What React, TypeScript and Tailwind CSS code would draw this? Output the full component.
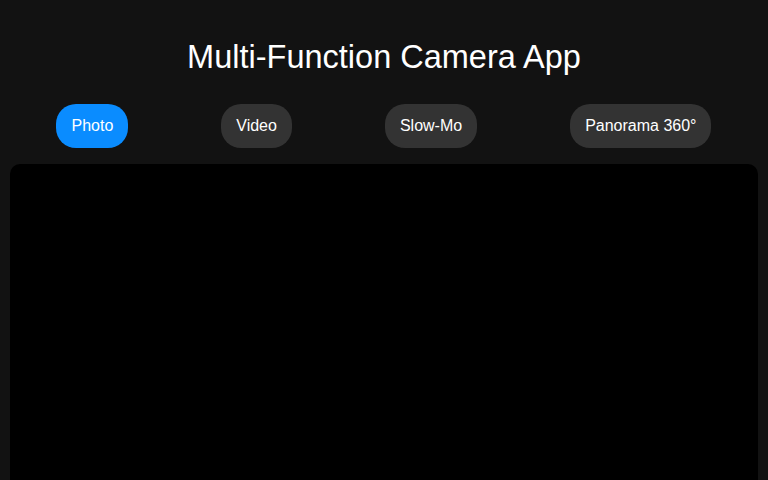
const MODES = ["Photo", "Video", "Slow-Mo", "Panorama 360°"]

export default function App() {
    const active = "Photo"

    return (
        <div className="h-[480px] overflow-hidden bg-[#121212] text-white font-['Liberation_Sans',Arial,sans-serif]">
            <h1 className="pt-[39px] text-center text-[32.5px] leading-[37px] font-normal">
                Multi-Function Camera App
            </h1>

            {/* Mode selector */}
            <div className="flex justify-around px-[10px] mt-[28px]">
                {MODES.map((mode) => (
                    <button
                        key={mode}
                        className={`h-[44px] px-[15px] rounded-[20px] text-[16px] leading-5 text-white ${mode === active ? "bg-[#0a8cff]" : "bg-[#333333]"}`}
                    >
                        {mode}
                    </button>
                ))}
            </div>

            {/* Viewfinder */}
            <div className="mx-[10px] mt-[16px] h-[400px] rounded-[10px] bg-black" />
        </div>
    )
}
